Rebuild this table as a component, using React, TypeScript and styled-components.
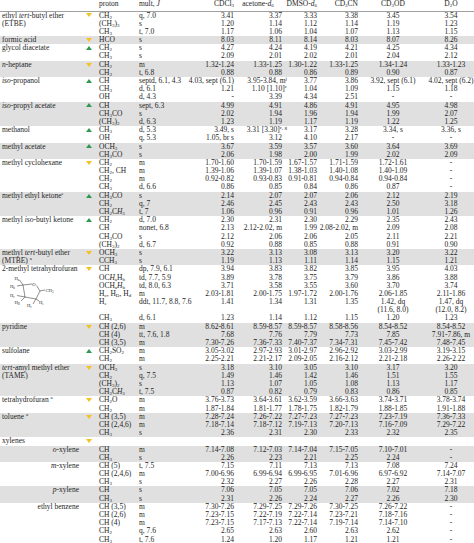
import React from 'react';
import styled, { createGlobalStyle } from 'styled-components';

const ROW = 8.2;
const COLS = '46px 49px 46px 48px 35px 41px 70px 46px';
type Align = 'left' | 'right' | 'center';
const ALIGNS: Align[] = ['left', 'left', 'right', 'right', 'right', 'right', 'center', 'center'];
const HEAD_ALIGNS: Align[] = ['left', 'left', 'right', 'center', 'right', 'right', 'center', 'center'];

const GlobalStyle = createGlobalStyle`
  html, body { margin: 0; padding: 0; background: #ffffff; }
  body { font-family: "Liberation Serif", "Times New Roman", serif; color: #1e1e1e; }
`;

const Table = styled.div`
  width: 474px;
  font-size: 7.5px;
  line-height: ${ROW}px;
`;

const Header = styled.div`
  display: flex;
  height: 10.5px;
  border-bottom: 1px solid #a0a0a0;
`;

const HeadSpacer = styled.div`
  width: 93px;
  flex: none;
`;

const Grid = styled.div`
  display: grid;
  grid-template-columns: ${COLS};
  flex: 1;
`;

const Cell = styled.div<{ $align: Align; $pad?: boolean }>`
  white-space: nowrap;
  text-align: ${(p) => p.$align};
  padding-left: ${(p) => (p.$pad ? '6px' : '0')};
  height: ${ROW}px;
  display: ${(p) => (p.$align === 'center' ? 'flex' : 'block')};
  justify-content: center;
`;

const Group = styled.div<{ $shade: boolean }>`
  display: flex;
  background: ${(p) => (p.$shade ? '#e0e0e0' : '#ffffff')};
`;

const NameCell = styled.div<{ $sub?: boolean }>`
  width: 85px;
  flex: none;
  box-sizing: border-box;
  padding-left: 2px;
  padding-right: ${(p) => (p.$sub ? '6px' : '0')};
  text-align: ${(p) => (p.$sub ? 'right' : 'left')};
`;

const MarkerCell = styled.div`
  width: 8px;
  flex: none;
  display: flex;
  justify-content: center;
  padding-top: 1.9px;
  box-sizing: border-box;
`;

const Triangle = styled.div<{ $dir: 'up' | 'down' }>`
  width: 0;
  height: 0;
  border-left: 3px solid transparent;
  border-right: 3px solid transparent;
  ${(p) =>
    p.$dir === 'down'
      ? 'border-top: 4.6px solid #f3c223;'
      : 'border-bottom: 4.6px solid #2f9a4e;'}
`;

const Lines = styled.div`
  flex: 1;
  display: flex;
  flex-direction: column;
`;

const Sub = styled.span`
  font-size: 5px;
  vertical-align: -1.4px;
  line-height: 0;
`;

const Sup = styled.span`
  font-size: 5px;
  vertical-align: 2.8px;
  line-height: 0;
`;

const HangSup = styled(Sup)`
  margin-right: -5px;
`;

const It = styled.span`
  font-style: italic;
`;

const Structure = styled.svg`
  display: block;
  margin-top: 0.5px;
`;

function fmt(s: string, hang = false): React.ReactNode[] {
  const out: React.ReactNode[] = [];
  let buf = '';
  let i = 0;
  let key = 0;
  const flush = () => {
    if (buf) {
      out.push(buf);
      buf = '';
    }
  };
  while (i < s.length) {
    const c = s[i];
    if (c === '_' || c === '^') {
      flush();
      let t = '';
      if (s[i + 1] === '{') {
        const j = s.indexOf('}', i + 2);
        t = s.slice(i + 2, j);
        i = j + 1;
      } else {
        t = s[i + 1];
        i += 2;
      }
      if (c === '_') out.push(<Sub key={key++}>{fmt(t)}</Sub>);
      else if (hang) out.push(<HangSup key={key++}>{fmt(t)}</HangSup>);
      else out.push(<Sup key={key++}>{fmt(t)}</Sup>);
    } else if (c === '~') {
      flush();
      const j = s.indexOf('~', i + 1);
      out.push(<It key={key++}>{fmt(s.slice(i + 1, j))}</It>);
      i = j + 1;
    } else if (c === '\n') {
      flush();
      out.push(<br key={key++} />);
      i++;
    } else {
      buf += c;
      i++;
    }
  }
  flush();
  return out;
}

type Row = string[];
type Compound = {
  name: string;
  marker?: 'up' | 'down';
  sub?: boolean;
  structure?: boolean;
  rows: Row[];
};

const DATA: Compound[] = [
  {
    name: 'ethyl ~tert~-butyl ether\n(ETBE)',
    marker: 'down',
    rows: [
      ['CH_2', 'q, 7.0', '3.41', '3.37', '3.33', '3.38', '3.45', '3.54'],
      ['(CH_3)_3', 's', '1.20', '1.14', '1.12', '1.14', '1.19', '1.23'],
      ['CH_3', 't, 7.0', '1.17', '1.06', '1.04', '1.07', '1.13', '1.15'],
    ],
  },
  {
    name: 'formic acid',
    marker: 'down',
    rows: [['HCO', 's', '8.03', '8.11', '8.14', '8.03', '8.07', '8.26']],
  },
  {
    name: 'glycol diacetate',
    marker: 'up',
    rows: [
      ['CH_2', 's', '4.27', '4.24', '4.19', '4.21', '4.25', '4.34'],
      ['CH_3', 's', '2.09', '2.01', '2.02', '2.01', '2.04', '2.12'],
    ],
  },
  {
    name: '~n~-heptane',
    marker: 'down',
    rows: [
      ['CH_2', 'm', '1.32-1.24', '1.33-1.25', '1.30-1.22', '1.33-1.25', '1.34-1.24', '1.33-1.23'],
      ['CH_3', 't, 6.8', '0.88', '0.88', '0.86', '0.89', '0.90', '0.87'],
    ],
  },
  {
    name: '~iso~-propanol',
    marker: 'up',
    rows: [
      ['CH', 'septd, 6.1, 4.3', '4.03, sept (6.1)', '3.95-3.84, m^j', '3.77', '3.86', '3.92, sept (6.1)', '4.02, sept (6.2)'],
      ['CH_3', 'd, 6.1', '1.21', '1.10 [1.10]^c', '1.04', '1.09', '1.15', '1.18'],
      ['OH', 'd, 4.3', '-', '3.39', '4.34', '2.51', '-', '-'],
    ],
  },
  {
    name: '~iso~-propyl acetate',
    marker: 'up',
    rows: [
      ['CH', 'sept, 6.3', '4.99', '4.91', '4.86', '4.91', '4.95', '4.98'],
      ['CH_3CO', 's', '2.02', '1.94', '1.96', '1.94', '1.99', '2.07'],
      ['(CH_3)_2', 'd, 6.3', '1.23', '1.19', '1.17', '1.19', '1.22', '1.25'],
    ],
  },
  {
    name: 'methanol',
    marker: 'up',
    rows: [
      ['CH_3', 'd, 5.3', '3.49, s', '3.31 [3.30]^{c, g}', '3.17', '3.28', '3.34, s', '3.36, s'],
      ['OH', 'q, 5.3', '1.05, br s', '3.12', '4.10', '2.17', '-', '-'],
    ],
  },
  {
    name: 'methyl acetate',
    marker: 'up',
    rows: [
      ['OCH_3', 's', '3.67', '3.59', '3.57', '3.60', '3.64', '3.69'],
      ['CH_3CO', 's', '2.06', '1.98', '2.00', '1.99', '2.02', '2.09'],
    ],
  },
  {
    name: 'methyl cyclohexane',
    marker: 'down',
    rows: [
      ['CH_2', 'm', '1.70-1.60', '1.70-1.59', '1.67-1.57', '1.71-1.59', '1.72-1.61', '-'],
      ['CH_2, CH', 'm', '1.39-1.06', '1.39-1.07', '1.38-1.03', '1.40-1.08', '1.40-1.09', '-'],
      ['CH_2', 'm', '0.92-0.82', '0.93-0.83', '0.91-0.81', '0.94-0.84', '0.94-0.84', '-'],
      ['CH_3', 'd, 6.6', '0.86', '0.85', '0.84', '0.86', '0.87', '-'],
    ],
  },
  {
    name: 'methyl ethyl ketone^e',
    marker: 'up',
    rows: [
      ['CH_3CO', 's', '2.14', '2.07', '2.07', '2.06', '2.12', '2.19'],
      ['CH_2', 'q, 7', '2.46', '2.45', '2.43', '2.43', '2.50', '3.18'],
      ['CH_2C~H~_3', 't, 7', '1.06', '0.96', '0.91', '0.96', '1.01', '1.26'],
    ],
  },
  {
    name: 'methyl ~iso~-butyl ketone',
    marker: 'up',
    rows: [
      ['CH_2', 'd, 7.0', '2.30', '2.31', '2.30', '2.29', '2.35', '2.43'],
      ['CH', 'nonet, 6.8', '2.13', '2.12-2.02, m', '1.99', '2.08-2.02, m', '2.09', '2.08'],
      ['CH_3CO', 's', '2.12', '2.06', '2.06', '2.05', '2.11', '2.21'],
      ['(CH_3)_2', 'd, 6.7', '0.92', '0.88', '0.85', '0.88', '0.91', '0.90'],
    ],
  },
  {
    name: 'methyl ~tert~-butyl ether\n(MTBE) ^a',
    marker: 'down',
    rows: [
      ['OCH_3', 's', '3.22', '3.13', '3.08', '3.13', '3.20', '3.22'],
      ['CCH_3', 's', '1.19', '1.13', '1.11', '1.14', '1.15', '1.21'],
    ],
  },
  {
    name: '2-methyl tetrahydrofuran',
    marker: 'down',
    structure: true,
    rows: [
      ['CH', 'dp, 7.9, 6.1', '3.94', '3.83', '3.82', '3.85', '3.95', '4.03'],
      ['OC~H~_aH_b', 'td, 7.7, 5.9', '3.89', '3.78', '3.75', '3.79', '3.86', '3.88'],
      ['OCH_a~H~_b', 'td, 8.0, 6.3', '3.71', '3.58', '3.55', '3.60', '3.70', '3.74'],
      ['H_c, H_{D}, H_d', 'm', '2.03-1.81', '2.00-1.75', '1.97-1.72', '2.00-1.76', '2.06-1.85', '2.11-1.86'],
      ['H_e', 'ddt, 11.7, 8.8, 7.6', '1.41', '1.34', '1.31', '1.35', '1.42, dq', '1.47, dq'],
      ['', '', '', '', '', '', '(11.6, 8.0)', '(12.0, 8.2)'],
      ['CH_3', 'd, 6.1', '1.23', '1.14', '1.12', '1.15', '1.20', '1.23'],
    ],
  },
  {
    name: 'pyridine',
    marker: 'down',
    rows: [
      ['CH (2,6)', 'm', '8.62-8.61', '8.59-8.57', '8.59-8.57', '8.58-8.56', '8.54-8.52', '8.54-8.52'],
      ['CH (4)', 'tt, 7.6, 1.8', '7.68', '7.76', '7.79', '7.73', '7.85', '7.91-7.86, m'],
      ['CH (3,5)', 'm', '7.30-7.26', '7.36-7.33', '7.40-7.37', '7.34-7.31', '7.45-7.42', '7.48-7.45'],
    ],
  },
  {
    name: 'sulfolane',
    marker: 'up',
    rows: [
      ['CH_2SO_2', 'm', '3.05-3.02', '2.97-2.93', '3.01-2.97', '2.96-2.92', '3.03-2.99', '3.19-3.15'],
      ['CH_2', 'm', '2.25-2.21', '2.21-2.17', '2.09-2.05', '2.16-2.12', '2.21-2.18', '2.26-2.22'],
    ],
  },
  {
    name: '~tert~-amyl methyl ether\n(TAME)',
    marker: 'down',
    rows: [
      ['OCH_3', 's', '3.18', '3.10', '3.05', '3.10', '3.17', '3.20'],
      ['CH_2', 'q, 7.5', '1.49', '1.46', '1.42', '1.46', '1.51', '1.55'],
      ['(CH_3)_2', 's', '1.13', '1.07', '1.05', '1.08', '1.13', '1.17'],
      ['CH_2C~H~_3', 't, 7.5', '0.87', '0.82', '0.79', '0.83', '0.86', '0.85'],
    ],
  },
  {
    name: 'tetrahydrofuran ^a',
    marker: 'down',
    rows: [
      ['CH_2O', 'm', '3.76-3.73', '3.64-3.61', '3.62-3.59', '3.66-3.63', '3.74-3.71', '3.78-3.74'],
      ['CH_2', 'm', '1.87-1.84', '1.81-1.77', '1.78-1.75', '1.82-1.79', '1.88-1.85', '1.91-1.88'],
    ],
  },
  {
    name: 'toluene ^a',
    marker: 'down',
    rows: [
      ['CH (3,5)', 'm', '7.28-7.24', '7.26-7.22', '7.27-7.23', '7.27-7.23', '7.23-7.19', '7.36-7.33'],
      ['CH (2,4,6)', 'm', '7.18-7.14', '7.18-7.12', '7.19-7.13', '7.20-7.13', '7.16-7.09', '7.29-7.22'],
      ['CH_3', 's', '2.36', '2.31', '2.30', '2.33', '2.32', '2.35'],
    ],
  },
  {
    name: 'xylenes',
    marker: 'down',
    rows: [['', '', '', '', '', '', '', '']],
  },
  {
    name: '~o~-xylene',
    sub: true,
    rows: [
      ['CH', 'm', '7.14-7.08', '7.12-7.03', '7.14-7.04', '7.15-7.05', '7.10-7.01', '-'],
      ['CH_3', 's', '2.26', '2.23', '2.21', '2.25', '2.24', '-'],
    ],
  },
  {
    name: '~m~-xylene',
    sub: true,
    rows: [
      ['CH (5)', 't, 7.5', '7.15', '7.11', '7.13', '7.13', '7.08', '7.24'],
      ['CH (2,4,6)', 'm', '7.00-6.96', '6.99-6.94', '6.99-6.95', '7.01-6.96', '6.97-6.92', '7.14-7.07'],
      ['CH_3', 's', '2.32', '2.27', '2.26', '2.28', '2.27', '2.31'],
    ],
  },
  {
    name: '~p~-xylene',
    sub: true,
    rows: [
      ['CH', 's', '7.06', '7.05', '7.05', '7.06', '7.02', '7.18'],
      ['CH_3', 's', '2.31', '2.26', '2.24', '2.27', '2.26', '2.30'],
    ],
  },
  {
    name: 'ethyl benzene',
    sub: true,
    rows: [
      ['CH (3,5)', 'm', '7.30-7.26', '7.29-7.25', '7.29-7.26', '7.30-7.25', '7.26-7.22', '-'],
      ['CH (2,6)', 'm', '7.23-7.15', '7.22-7.19', '7.22-7.14', '7.23-7.21', '7.18-7.16', '-'],
      ['CH (4)', 'm', '7.23-7.15', '7.17-7.13', '7.22-7.14', '7.19-7.14', '7.14-7.10', '-'],
      ['CH_2', 'q, 7.6', '2.65', '2.63', '2.60', '2.63', '2.62', '-'],
      ['CH_3', 't, 7.6', '1.24', '1.20', '1.17', '1.21', '1.21', '-'],
    ],
  },
];

const HEAD = ['proton', 'mult, ~J~', 'CDCl_3', 'acetone-~d~_6', 'DMSO-~d~_6', 'CD_3CN', 'CD_3OD', 'D_2O'];

const MeTHF: React.FC = () => (
  <Structure width="62" height="40" viewBox="0 0 62 40">
    <g stroke="#333" strokeWidth="0.55" fill="none">
      <line x1="21" y1="11" x2="30" y2="10" />
      <line x1="34.5" y1="11.5" x2="38" y2="17" />
      <line x1="38" y1="17" x2="34" y2="25" />
      <line x1="34" y1="25" x2="23" y2="23" />
      <line x1="23" y1="23" x2="21" y2="11" />
      <line x1="21" y1="11" x2="17.5" y2="6" />
      <line x1="21" y1="11" x2="15" y2="12" />
      <line x1="38" y1="17" x2="43" y2="16" />
      <line x1="23" y1="23" x2="15" y2="21.5" />
      <line x1="23" y1="23" x2="19" y2="27" />
      <line x1="34" y1="25" x2="31" y2="30" />
      <line x1="34" y1="25" x2="37" y2="27" />
    </g>
    <g fill="#222" fontFamily="Liberation Serif, serif" fontSize="4.6">
      <text x="12.5" y="5.5">H<tspan fontSize="3" dy="1">a</tspan></text>
      <text x="8" y="13.5">H<tspan fontSize="3" dy="1">b</tspan></text>
      <text x="30.3" y="12">O</text>
      <text x="43.5" y="17.5">CH<tspan fontSize="3" dy="1">3</tspan></text>
      <text x="8" y="22.5">H<tspan fontSize="3" dy="1">c</tspan></text>
      <text x="12.5" y="30">H<tspan fontSize="3" dy="1">D</tspan></text>
      <text x="25" y="33">H<tspan fontSize="3" dy="1">c</tspan></text>
      <text x="37" y="29.5">H<tspan fontSize="3" dy="1">e</tspan></text>
    </g>
  </Structure>
);

export default function App() {
  return (
    <>
      <GlobalStyle />
      <Table>
        <Header>
          <HeadSpacer />
          <Grid>
            {HEAD.map((h, i) => (
              <Cell key={i} $align={HEAD_ALIGNS[i]} $pad={i === 0}>
                <span>{fmt(h)}</span>
              </Cell>
            ))}
          </Grid>
        </Header>
        {DATA.map((c, gi) => (
          <Group key={gi} $shade={gi % 2 === 1}>
            <NameCell $sub={c.sub}>
              {fmt(c.name)}
              {c.structure && <MeTHF />}
            </NameCell>
            <MarkerCell>{c.marker && <Triangle $dir={c.marker} />}</MarkerCell>
            <Lines>
              {c.rows.map((r, ri) => (
                <Grid key={ri}>
                  {r.map((v, ci) => (
                    <Cell key={ci} $align={ALIGNS[ci]} $pad={ci === 0}>
                      <span>{fmt(v, ci === 3)}</span>
                    </Cell>
                  ))}
                </Grid>
              ))}
            </Lines>
          </Group>
        ))}
      </Table>
    </>
  );
}
